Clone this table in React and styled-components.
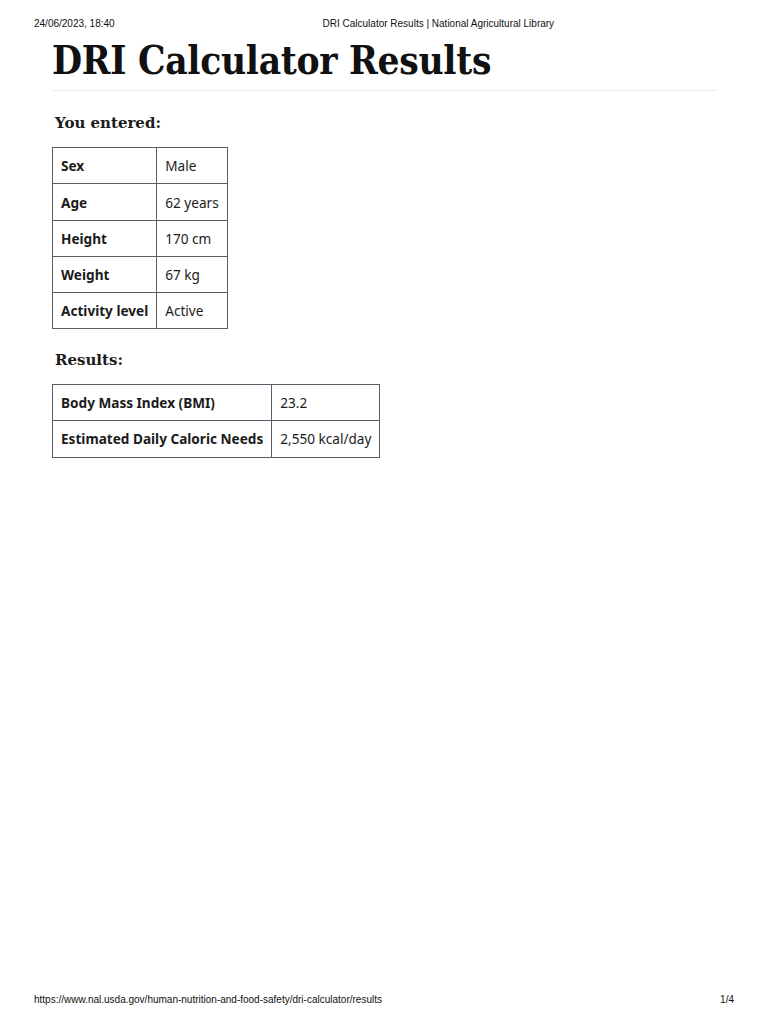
import React from 'react'
import styled, { createGlobalStyle } from 'styled-components'

const GlobalStyle = createGlobalStyle`
    html, body {
        margin: 0;
        padding: 0;
        background: #ffffff;
    }
`

const Page = styled.div`
    width: 768px;
    height: 1024px;
    display: flex;
    flex-direction: column;
    box-sizing: border-box;
`

const PrintBar = styled.div`
    display: flex;
    justify-content: space-between;
    align-items: flex-start;
    padding: ${props => props.$top}px 34px ${props => props.$bottom}px;
    line-height: 12px;
    font-family: "Liberation Sans", Arial, sans-serif;
    font-size: 10px;
    color: #111;
`

const BarMiddle = styled.span`
    flex: 1;
    text-align: center;
    padding-left: 28px;
`

const Content = styled.main`
    flex: 1;
    padding: 0 51px 0 52px;
`

const Title = styled.h1`
    margin: 0;
    padding: 9px 0 7px;
    font-family: "DejaVu Serif", "Liberation Serif", serif;
    font-stretch: condensed;
    font-weight: bold;
    font-size: 38.5px;
    line-height: 1.15;
    letter-spacing: -0.3px;
    color: #111;
    border-bottom: 1px solid #ececec;
`

const SectionTitle = styled.h2`
    margin: ${props => props.$top}px 0 15px 3px;
    font-family: "DejaVu Serif", "Liberation Serif", serif;
    font-weight: bold;
    font-size: 15px;
    color: #1b1b1b;
`

const Table = styled.table`
    border-collapse: collapse;
    font-family: "Noto Sans", "Open Sans", sans-serif;
    font-size: 13.6px;
    color: #1b1b1b;
`

const Cell = styled.td`
    border: 1px solid #5c5c6a;
    height: 36.2px;
    padding: 0 8px;
    box-sizing: border-box;
    font-weight: ${props => (props.$head ? 700 : 400)};
    white-space: nowrap;
`

const entered = [
    ['Sex', 'Male'],
    ['Age', '62 years'],
    ['Height', '170 cm'],
    ['Weight', '67 kg'],
    ['Activity level', 'Active'],
]

const results = [
    ['Body Mass Index (BMI)', '23.2'],
    ['Estimated Daily Caloric Needs', '2,550 kcal/day'],
]

const DataTable = ({ rows }) => (
    <Table>
        <tbody>
            {rows.map(([label, value]) => (
                <tr key={label}>
                    <Cell $head>{label}</Cell>
                    <Cell>{value}</Cell>
                </tr>
            ))}
        </tbody>
    </Table>
)

const App = () => {
    return (
        <>
            <GlobalStyle />
            <Page>
                <PrintBar $top={18} $bottom={0}>
                    <span>24/06/2023, 18:40</span>
                    <BarMiddle>DRI Calculator Results | National Agricultural Library</BarMiddle>
                </PrintBar>
                <Content>
                    <Title>DRI Calculator Results</Title>
                    <SectionTitle $top={23}>You entered:</SectionTitle>
                    <DataTable rows={entered} />
                    <SectionTitle $top={22}>Results:</SectionTitle>
                    <DataTable rows={results} />
                </Content>
                <PrintBar $top={20} $bottom={18}>
                    <span>https://www.nal.usda.gov/human-nutrition-and-food-safety/dri-calculator/results</span>
                    <span>1/4</span>
                </PrintBar>
            </Page>
        </>
    )
}

export default App
